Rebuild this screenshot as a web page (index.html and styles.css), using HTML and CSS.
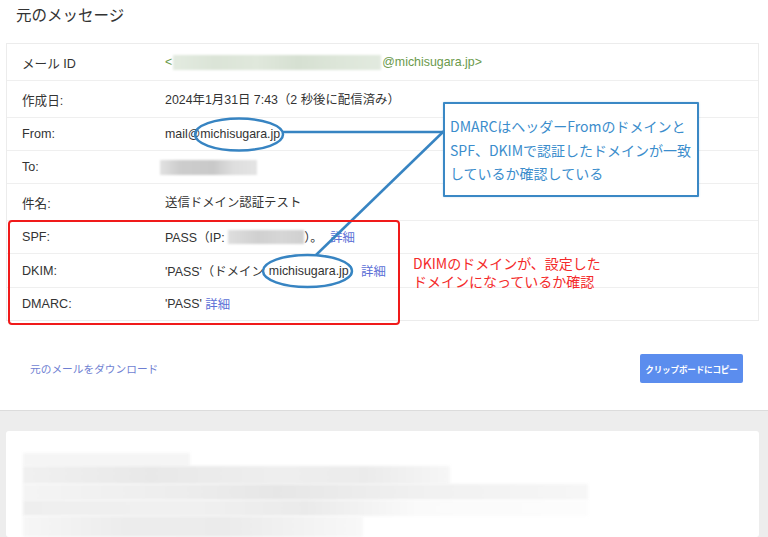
FILE: index.html
```html
<!DOCTYPE html>
<html lang="ja">
<head>
<meta charset="utf-8">
<title>元のメッセージ</title>
<link rel="stylesheet" href="styles.css">
</head>
<body>
<div class="top">
  <h1 class="title">元のメッセージ</h1>
  <div class="card">
    <div class="row h37">
      <div class="label">メール ID</div>
      <div class="value green">&lt;<span class="blur blur-id"></span>@michisugara.jp&gt;</div>
    </div>
    <div class="row h37">
      <div class="label">作成日:</div>
      <div class="value">2024年1月31日 7:43（2 秒後に配信済み）</div>
    </div>
    <div class="row h33">
      <div class="label">From:</div>
      <div class="value">mail@michisugara.jp</div>
    </div>
    <div class="row h33">
      <div class="label">To:</div>
      <div class="value"><span class="blur blur-to"></span></div>
    </div>
    <div class="row h37">
      <div class="label">件名:</div>
      <div class="value">送信ドメイン認証テスト</div>
    </div>
    <div class="row h33">
      <div class="label">SPF:</div>
      <div class="value">PASS（IP: <span class="blur blur-ip"></span>）。 <a class="link link-spf">詳細</a></div>
    </div>
    <div class="row h34">
      <div class="label">DKIM:</div>
      <div class="value">'PASS'（ドメイン<span class="dom">michisugara.jp</span>）<a class="link">詳細</a></div>
    </div>
    <div class="row h32 row-last">
      <div class="label">DMARC:</div>
      <div class="value">'PASS' <a class="link">詳細</a></div>
    </div>
  </div>
  <div class="actions">
    <a class="download">元のメールをダウンロード</a>
    <button class="copy">クリップボードにコピー</button>
  </div>
</div>
<div class="bottom">
  <div class="card2">
    <div class="bl bl1"></div>
    <div class="bl bl2"></div>
    <div class="bl bl3"></div>
    <div class="bl bl4"></div>
    <div class="bl bl5"></div>
  </div>
</div>

<svg class="overlay" width="768" height="537" viewBox="0 0 768 537">
  <ellipse cx="239" cy="134.5" rx="44" ry="16" fill="none" stroke="#3784c2" stroke-width="2.5"/>
  <ellipse cx="307.5" cy="271" rx="44.5" ry="16" fill="none" stroke="#3784c2" stroke-width="2.5"/>
  <line x1="283" y1="132" x2="444" y2="132" stroke="#3784c2" stroke-width="2.5"/>
  <line x1="444" y1="131" x2="316" y2="255" stroke="#3784c2" stroke-width="2.5"/>
</svg>
<div class="callout">DMARCはヘッダーFromのドメインと<br>SPF、DKIMで認証したドメインが一致<br>しているか確認している</div>
<div class="redbox"></div>
<div class="redtext">DKIMのドメインが、設定した<br>ドメインになっているか確認</div>
</body>
</html>
```
FILE: styles.css
```css
* { box-sizing: border-box; }
html, body { margin: 0; padding: 0; }
body {
  width: 768px;
  height: 537px;
  overflow: hidden;
  background: #fff;
  font-family: "Liberation Sans", Arial, "Noto Sans CJK JP", sans-serif;
  color: #333;
  position: relative;
}
.top { background: #fff; }
.title {
  margin: 0;
  padding: 6px 0 0 16px;
  font-size: 15.5px;
  line-height: 20px;
  font-weight: normal;
  color: #333;
  font-family: "Liberation Sans", "Noto Sans CJK JP", sans-serif;
}
.card {
  margin: 17px 9px 0 6px;
  border: 1px solid #ececec;
  background: #fff;
}
.row {
  display: flex;
  align-items: center;
  border-bottom: 1px solid #efefef;
  font-size: 12.4px;
}
.h37 { height: 37px; }
.h34 { height: 34px; }
.h33 { height: 33px; }
.h32 { height: 32px; }
.row-last { border-bottom: none; }
.label {
  width: 158px;
  padding-left: 15px;
  flex: none;
  font-size: 12.6px;
}
.value {
  display: flex;
  align-items: center;
  white-space: pre;
}
.green { color: #6b9a4c; }
.blur { display: inline-block; filter: blur(1px); }
.blur-id {
  width: 208px; height: 15px;
  background: linear-gradient(90deg, #e3ebe0 0%, #dbe4d7 20%, #e0e8dc 40%, #d6e0d2 60%, #dde6d9 80%, #e2eadf 100%);
  margin: 0 1px 0 1px;
}
.blur-to {
  width: 97px; height: 15px;
  background: linear-gradient(90deg, #e2e2e2 0%, #cdcdcd 20%, #c9c9c9 55%, #dedede 75%, #e4e4e4 100%);
  margin-left: -5px;
}
.blur-ip {
  width: 76px; height: 14px;
  background: linear-gradient(90deg, #dedede 0%, #d0d0d0 40%, #d6d6d6 70%, #d0d0d0 100%);
}
.dom { margin-left: 5px; }
.link { color: #5b6fd6; }
.link-spf { margin-left: 4px; }
.actions {
  display: flex;
  justify-content: space-between;
  align-items: center;
  padding: 33px 25px 27px 30px;
}
.download {
  font-size: 10.7px;
  color: #6f7fd2;
  font-family: "Noto Sans CJK JP", sans-serif;
}
.copy {
  width: 103px;
  height: 29px;
  border: none;
  border-radius: 2px;
  background: #5b8dee;
  color: #fff;
  font-weight: bold;
  font-size: 8.6px;
  padding: 0;
  font-family: "Noto Sans CJK JP", sans-serif;
  letter-spacing: -0.2px;
}
.bottom {
  background: #ededed;
  border-top: 1px solid #dcdcdc;
  padding: 20px 9px 0 6px;
  height: 127px;
  overflow: hidden;
}
.card2 {
  background: #fff;
  border-radius: 3px;
  height: 106px;
  padding: 22px 0 0 17px;
}
.bl { filter: blur(1.5px); }
.bl1 { width: 167px; height: 13px; background: #f5f5f5; }
.bl2 { width: 427px; height: 18px; background: linear-gradient(90deg, #f0f0f0, #e8e8e8 30%, #eeeeee 60%, #ebebeb 80%, #f6f6f6); }
.bl3 { width: 565px; height: 16px; background: linear-gradient(90deg, #f4f4f4, #ececec 30%, #e6e6e6 45%, #f0f0f0 70%, #f6f6f6); }
.bl4 { width: 565px; height: 16px; background: linear-gradient(90deg, #eeeeee, #f0f0f0 30%, #eaeaea 50%, #fafafa 70%, #fcfcfc); }
.bl5 { width: 340px; height: 21px; background: linear-gradient(90deg, #f6f6f6, #ececec 30%, #ebebeb 60%, #f8f8f8); }

.overlay {
  position: absolute;
  left: 0; top: 0;
  pointer-events: none;
}
.callout {
  position: absolute;
  left: 443px; top: 102px;
  width: 256px; height: 95px;
  border: 2px solid #3a88c5;
  border-radius: 1px;
  background: #fff;
  padding: 11px 0 0 5px;
  font-size: 14px;
  line-height: 23.5px;
  color: #3b8dcc;
  font-family: "Noto Sans CJK JP", sans-serif;
  box-shadow: 0 0 2px rgba(58,136,197,0.3);
  white-space: nowrap;
}
.redbox {
  position: absolute;
  left: 8px; top: 220px;
  width: 392px; height: 105px;
  border: 2px solid #f01a1a;
  border-radius: 4px;
}
.redtext {
  position: absolute;
  left: 413px; top: 254px;
  font-size: 14px;
  line-height: 18px;
  color: #f42a2a;
  font-family: "Noto Sans CJK JP", sans-serif;
  white-space: nowrap;
}
```
